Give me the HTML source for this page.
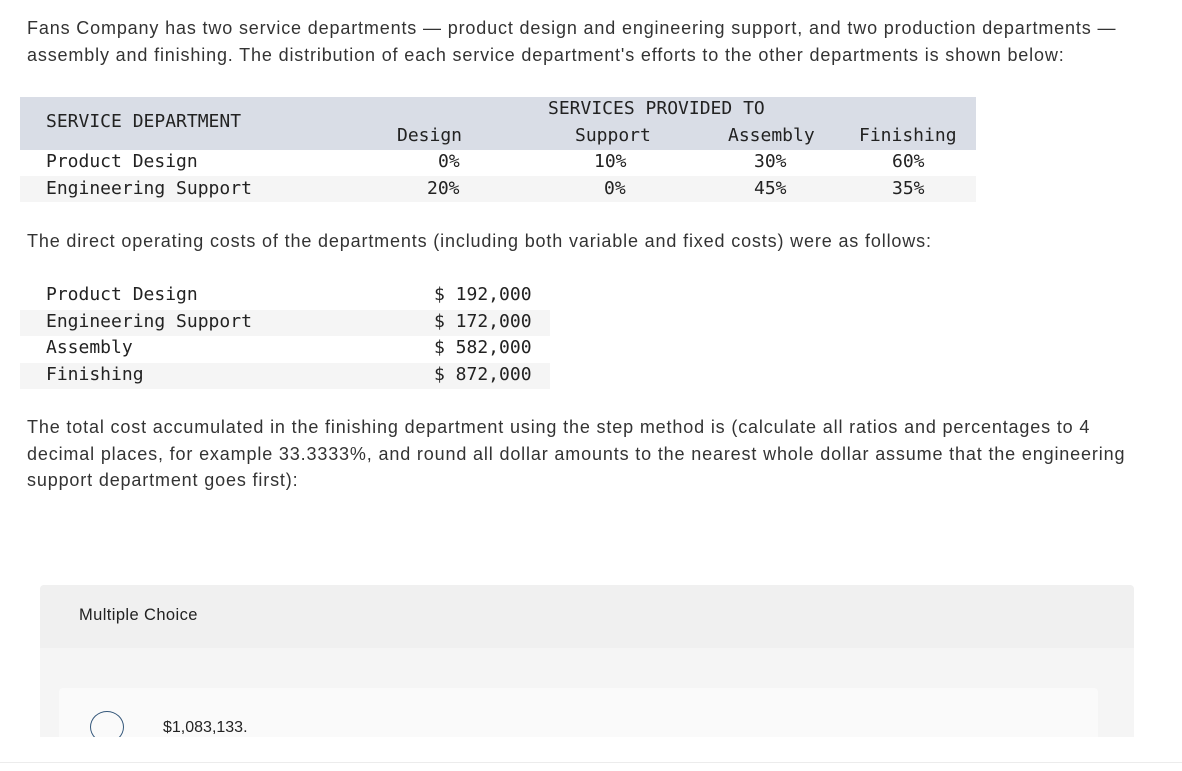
<!DOCTYPE html>
<html><head><style>
body{margin:0;width:1182px;height:771px;background:#fff;position:relative;overflow:hidden;font-family:"Liberation Sans",sans-serif;color:#333;}
.t{position:absolute;left:27px;font-size:18px;line-height:26.5px;letter-spacing:0.85px;}
.m{position:absolute;font-family:"DejaVu Sans Mono","Liberation Mono",monospace;font-size:18px;line-height:22px;color:#222;white-space:nowrap;}
.bg{position:absolute;}
</style></head><body>
<div class="t" style="top:15px;width:1120px">Fans Company has two service departments — product design and engineering support, and two production departments — assembly and finishing. The distribution of each service department's efforts to the other departments is shown below:</div>

<div class="bg" style="left:20px;top:97px;width:956px;height:53px;background:#d9dde6"></div>
<div class="bg" style="left:20px;top:176px;width:956px;height:26px;background:#f5f5f5"></div>
<div class="m" style="left:46px;top:111px">SERVICE DEPARTMENT</div>
<div class="m" style="left:548px;top:98px">SERVICES PROVIDED TO</div>
<div class="m" style="left:397px;top:125px">Design</div>
<div class="m" style="left:575px;top:125px">Support</div>
<div class="m" style="left:728px;top:125px">Assembly</div>
<div class="m" style="left:859px;top:125px">Finishing</div>
<div class="m" style="left:46px;top:151px">Product Design</div>
<div class="m" style="left:46px;top:178px">Engineering Support</div>
<div class="m" style="left:438px;top:151px">0%</div>
<div class="m" style="left:427px;top:178px">20%</div>
<div class="m" style="left:594px;top:151px">10%</div>
<div class="m" style="left:604px;top:178px">0%</div>
<div class="m" style="left:754px;top:151px">30%</div>
<div class="m" style="left:754px;top:178px">45%</div>
<div class="m" style="left:892px;top:151px">60%</div>
<div class="m" style="left:892px;top:178px">35%</div>

<div class="t" style="top:228px">The direct operating costs of the departments (including both variable and fixed costs) were as follows:</div>

<div class="bg" style="left:20px;top:310px;width:530px;height:26px;background:#f5f5f5"></div>
<div class="bg" style="left:20px;top:363px;width:530px;height:26px;background:#f5f5f5"></div>
<div class="m" style="left:46px;top:284px">Product Design</div>
<div class="m" style="left:46px;top:311px">Engineering Support</div>
<div class="m" style="left:46px;top:337px">Assembly</div>
<div class="m" style="left:46px;top:364px">Finishing</div>
<div class="m" style="left:434px;top:284px">$ 192,000</div>
<div class="m" style="left:434px;top:311px">$ 172,000</div>
<div class="m" style="left:434px;top:337px">$ 582,000</div>
<div class="m" style="left:434px;top:364px">$ 872,000</div>

<div class="t" style="top:414px;width:1120px">The total cost accumulated in the finishing department using the step method is (calculate all ratios and percentages to 4 decimal places, for example 33.3333%, and round all dollar amounts to the nearest whole dollar assume that the engineering support department goes first):</div>

<div class="bg" style="left:40px;top:585px;width:1094px;height:152px;background:#f5f5f5;border-radius:4px 4px 0 0"></div>
<div class="bg" style="left:40px;top:585px;width:1094px;height:63px;background:#f0f0f0;border-radius:4px 4px 0 0"></div>
<div style="position:absolute;left:79px;top:606px;font-size:16.5px;color:#222;letter-spacing:0.4px">Multiple Choice</div>
<div class="bg" style="left:59px;top:688px;width:1039px;height:49px;background:#fafafa;border-radius:4px 4px 0 0"></div>
<div class="bg" style="left:90px;top:711px;width:34px;height:32px;border:1.5px solid #34577a;border-radius:50%;box-sizing:border-box"></div>
<div style="position:absolute;left:163px;top:719px;font-size:16px;color:#222;letter-spacing:0px">$1,083,133.</div>
<div class="bg" style="left:0;top:737px;width:1182px;height:34px;background:#fff"></div>
<div class="bg" style="left:0;top:762px;width:1182px;height:1px;background:#ececec"></div>
</body></html>
